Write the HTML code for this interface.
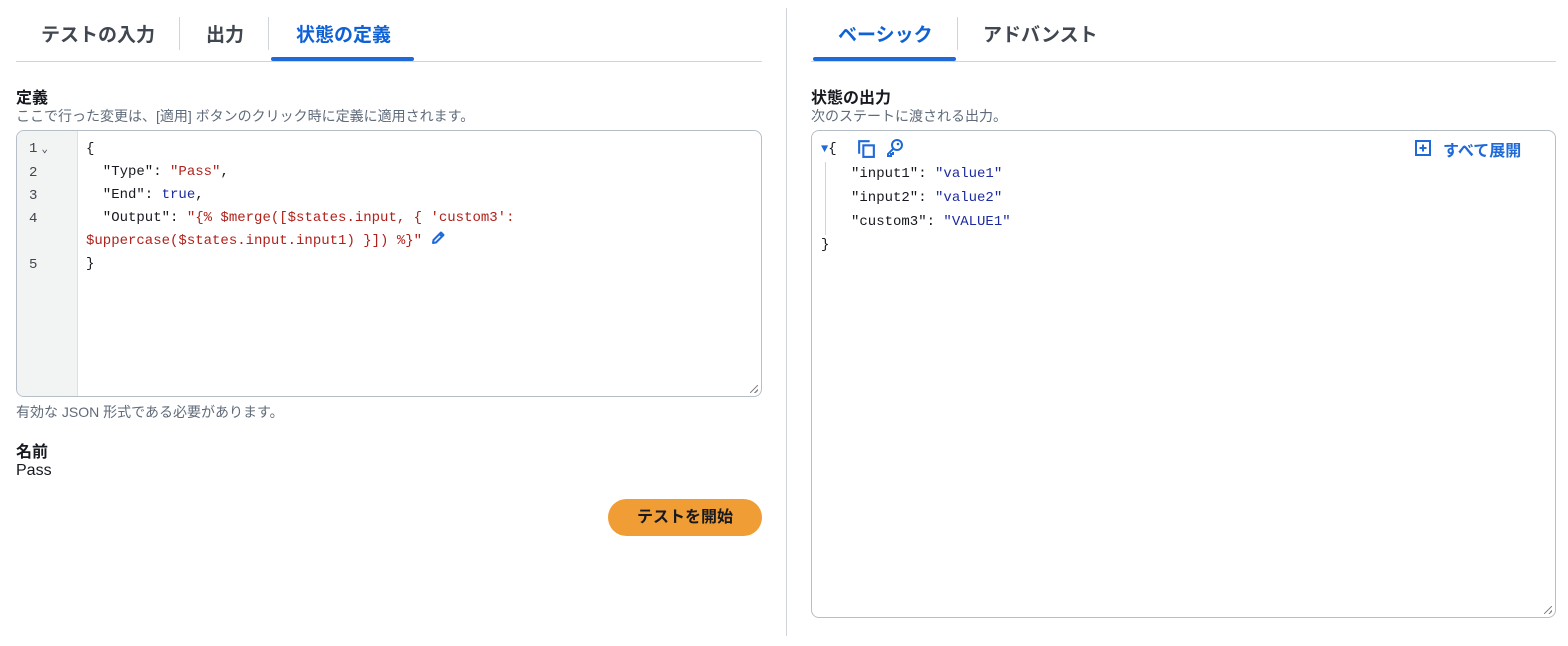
<!DOCTYPE html>
<html><head><meta charset="utf-8"><style>
*{margin:0;padding:0;box-sizing:border-box}
body{width:1568px;height:646px;background:#fff;font-family:"Liberation Sans","Noto Sans CJK JP",sans-serif;color:#16191f;position:relative;overflow:hidden}
.a{position:absolute;white-space:nowrap}
.tab{font-size:19px;font-weight:bold;color:#414750}
.sep{position:absolute;width:1px;background:#d1d5db}
.mono{font-family:"Liberation Mono",monospace;font-size:14px}
.h{font-size:16px;font-weight:bold;color:#16191f}
.d{font-size:14px;color:#5f6b7a}
.r{color:#b0211b}.b{color:#1d2ba0}
</style></head><body>
<div class="a tab" style="left:41px;top:20px">テストの入力</div>
<div class="sep" style="left:179px;top:17px;height:33px"></div>
<div class="a tab" style="left:206px;top:20px">出力</div>
<div class="sep" style="left:268px;top:17px;height:33px"></div>
<div class="a tab" style="left:296px;top:20px;color:#0f62d6">状態の定義</div>
<div class="a" style="left:16px;top:61px;width:746px;height:1px;background:#d1d5db"></div>
<div class="a" style="left:271px;top:57px;width:143px;height:4px;border-radius:2px;background:#1f6ad8"></div>

<div class="a h" style="left:16px;top:84px">定義</div>
<div class="a d" style="left:16px;top:106px">ここで行った変更は、[適用] ボタンのクリック時に定義に適用されます。</div>
<div class="a" style="left:16px;top:130px;width:746px;height:267px;border:1px solid #b6bec9;border-radius:8px;overflow:hidden">
 <div style="position:absolute;left:0;top:0;width:61px;height:100%;background:#f2f3f3;border-right:1px solid #dcdfe3"></div>
 <div class="mono" style="position:absolute;left:12px;top:7px;line-height:23px;color:#414750">1<span style="font-size:11px;margin-left:4px">⌄</span><br>2<br>3<br>4<br><br>5</div>
 <div class="mono" style="position:absolute;left:69px;top:7px;line-height:23px;color:#16191f;white-space:pre">{
  "Type": <span class="r">"Pass"</span>,
  "End": <span class="b">true</span>,
  "Output": <span class="r">"{% $merge([$states.input, { 'custom3':</span>
<span class="r">$uppercase($states.input.input1) }]) %}"</span> <svg width="16" height="16" viewBox="0 0 16 16" style="vertical-align:-2px"><path d="M3 13 L3.5 10 L11 2.5 L13.5 5 L6 12.5 Z M9.5 4 L12 6.5" fill="none" stroke="#1f6ad8" stroke-width="2" stroke-linejoin="round"/></svg>
}</div>
 <div style="position:absolute;right:3px;bottom:3px;width:8px;height:8px;background:linear-gradient(135deg,transparent 45%,#888 45%,#888 55%,transparent 55%,transparent 75%,#888 75%,#888 85%,transparent 85%)"></div>
</div>
<div class="a d" style="left:16px;top:402px">有効な JSON 形式である必要があります。</div>
<div class="a h" style="left:16px;top:438px">名前</div>
<div class="a" style="left:16px;top:462px;font-size:16px">Pass</div>
<div class="a" style="left:608px;top:499px;width:154px;height:37px;border-radius:19px;background:#f09d35;font-size:16px;font-weight:bold;text-align:center;line-height:37px;color:#16191f">テストを開始</div>

<div class="sep" style="left:786px;top:8px;height:628px"></div>

<div class="a tab" style="left:838px;top:20px;color:#0f62d6">ベーシック</div>
<div class="sep" style="left:957px;top:17px;height:33px"></div>
<div class="a tab" style="left:983px;top:20px">アドバンスト</div>
<div class="a" style="left:811px;top:61px;width:745px;height:1px;background:#d1d5db"></div>
<div class="a" style="left:813px;top:57px;width:143px;height:4px;border-radius:2px;background:#1f6ad8"></div>

<div class="a h" style="left:811px;top:84px">状態の出力</div>
<div class="a d" style="left:811px;top:106px">次のステートに渡される出力。</div>
<div class="a" style="left:811px;top:130px;width:745px;height:488px;border:1px solid #b6bec9;border-radius:8px">
 <div class="mono" style="position:absolute;left:9px;top:7px;line-height:23px;white-space:pre"><span style="color:#1f6ad8;font-size:12px">▼</span>{</div>
 <svg style="position:absolute;left:44px;top:7px" width="21" height="21" viewBox="0 0 20 20"><path d="M2 2 H13 V4 H4 V15 H2 Z" fill="#1f6ad8"/><rect x="7" y="7" width="10" height="11" fill="none" stroke="#1f6ad8" stroke-width="2"/></svg>
 <svg style="position:absolute;left:72px;top:6px" width="22" height="22" viewBox="0 0 22 22"><circle cx="13" cy="8" r="5" fill="none" stroke="#1f6ad8" stroke-width="2"/><path d="M9.5 11.5 L4 17 V19 H7 V17 H9 V15" fill="none" stroke="#1f6ad8" stroke-width="2"/><circle cx="14" cy="7" r="1.3" fill="#1f6ad8"/></svg>
 <div style="position:absolute;left:13px;top:31px;width:1px;height:73px;background:#d1d5db"></div>
 <div class="mono" style="position:absolute;left:39px;top:31px;line-height:24px;white-space:pre">"input1": <span class="b">"value1"</span>
"input2": <span class="b">"value2"</span>
"custom3": <span class="b">"VALUE1"</span></div>
 <div class="mono" style="position:absolute;left:9px;top:103px;line-height:23px">}</div>
 <svg style="position:absolute;left:602px;top:8px" width="18" height="18" viewBox="0 0 18 18"><rect x="2" y="2" width="14" height="14" fill="none" stroke="#1f6ad8" stroke-width="2"/><path d="M9 5.5 V12.5 M5.5 9 H12.5" stroke="#1f6ad8" stroke-width="2"/></svg>
 <div style="position:absolute;left:631px;top:6px;font-size:16px;font-weight:bold;color:#1f6ad8">すべて展開</div>
 <div style="position:absolute;right:3px;bottom:3px;width:8px;height:8px;background:linear-gradient(135deg,transparent 45%,#888 45%,#888 55%,transparent 55%,transparent 75%,#888 75%,#888 85%,transparent 85%)"></div>
</div>
</body></html>
